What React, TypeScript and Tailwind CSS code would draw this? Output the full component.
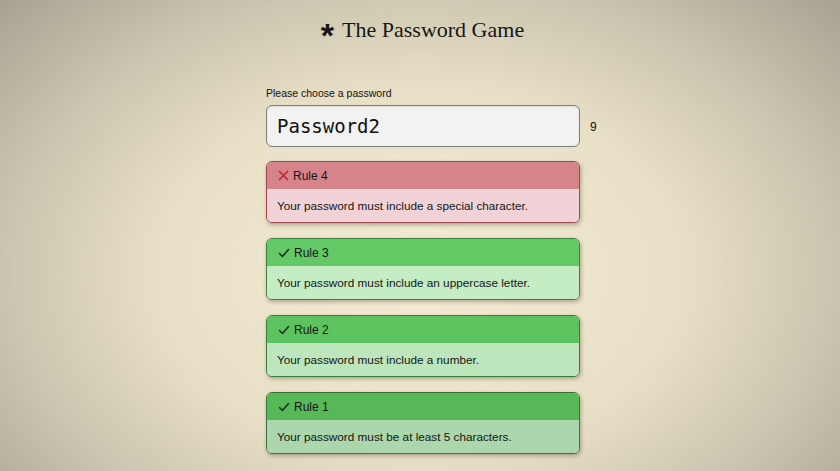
import React from "react";

type Rule = { n: number; text: string; ok: boolean; head: string; body: string; border: string };

const rules: Rule[] = [
  { n: 4, text: "Your password must include a special character.", ok: false, head: "bg-[#d6848a]", body: "bg-[#f1d3d7]", border: "border-[#9c4a4f]" },
  { n: 3, text: "Your password must include an uppercase letter.", ok: true, head: "bg-[#63c964]", body: "bg-[#c4edc3]", border: "border-[#3f7f3f]" },
  { n: 2, text: "Your password must include a number.", ok: true, head: "bg-[#5dc35e]", body: "bg-[#bde6bc]", border: "border-[#3d7a3d]" },
  { n: 1, text: "Your password must be at least 5 characters.", ok: true, head: "bg-[#57b858]", body: "bg-[#acd6ab]", border: "border-[#3a733a]" },
];

function Check() {
  return (
    <svg width="12" height="12" viewBox="0 0 12 12" fill="none" stroke="#1f2a1f" strokeWidth="1.5" strokeLinecap="round" strokeLinejoin="round">
      <path d="M1.5 6.5 L4.5 9.5 L10.5 2.5" />
    </svg>
  );
}

function Cross() {
  return (
    <svg width="11" height="11" viewBox="0 0 11 11" fill="none" stroke="#c0262d" strokeWidth="1.7" strokeLinecap="round">
      <path d="M1.5 1.5 L9.5 9.5 M9.5 1.5 L1.5 9.5" />
    </svg>
  );
}

export default function App() {
  return (
    <div
      className="w-[840px] h-[471px] overflow-hidden flex flex-col items-center bg-[radial-gradient(ellipse_62%_78%_at_50%_58%,#f3ebd3_0%,#e8e0c6_50%,#cdc6b0_78%,#9e988a_118%)]"
      style={{ fontFamily: '"Liberation Sans", Arial, sans-serif' }}
    >
      <h1
        className="mt-[16px] ml-[5px] h-[28px] flex items-center gap-[8px] text-[22px] leading-[28px] text-[#161616]"
        style={{ fontFamily: '"Liberation Serif", "Times New Roman", serif' }}
      >
        <span
          className="text-[34px] leading-[28px] relative top-[5px] font-bold"
          style={{ fontFamily: '"Liberation Sans", Arial, sans-serif' }}
        >
          *
        </span>
        <span>The Password Game</span>
      </h1>

      <div className="mt-[42px] w-[314px] ml-[6px]">
        <div className="text-[10.5px] leading-[14px] text-[#111] mb-[5px]">Please choose a password</div>
        <div className="relative">
          <div className="h-[42px] rounded-[6px] border border-[#7c7c78] bg-[#f2f2f0] flex items-center px-[10px] shadow-[inset_0_1px_2px_rgba(0,0,0,0.08)]">
            <span
              className="text-[19px] text-[#111]"
              style={{ fontFamily: '"DejaVu Sans Mono", "Liberation Mono", monospace' }}
            >
              Password2
            </span>
          </div>
          <span className="absolute left-[324px] top-[13px] text-[12px] text-[#111]">9</span>
        </div>

        <div className="mt-[14px] flex flex-col gap-[15px]">
          {rules.map((r) => (
            <div
              key={r.n}
              className={`h-[62px] rounded-[6px] border ${r.border} overflow-hidden flex flex-col shadow-[1px_2px_4px_rgba(60,50,30,0.35)]`}
            >
              <div className={`h-[27px] ${r.head} flex items-center gap-[4px] pl-[11px] text-[12px] text-[#151515]`}>
                {r.ok ? <Check /> : <Cross />}
                <span>Rule {r.n}</span>
              </div>
              <div className={`flex-1 ${r.body} flex items-center pl-[10px] text-[11.75px] text-[#151515]`}>{r.text}</div>
            </div>
          ))}
        </div>
      </div>
    </div>
  );
}
